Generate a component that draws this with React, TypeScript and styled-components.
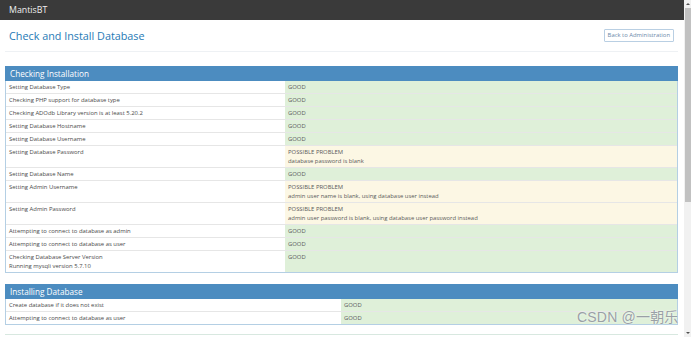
import React from "react";
import styled, { createGlobalStyle } from "styled-components";

const Global = createGlobalStyle`
  html, body { margin: 0; padding: 0; background: #fff; overflow: hidden; }
  body { font-family: "Open Sans", "Liberation Sans", sans-serif; color: #555; }
`;

const Shell = styled.div`
  display: flex;
  width: 691px;
  height: 337px;
  overflow: hidden;
`;

const Main = styled.div`
  flex: 1;
  min-width: 0;
  position: relative;
`;

const Scrollbar = styled.div`
  width: 7px;
  background: #f1f1f1;
  display: flex;
  flex-direction: column;
  align-items: stretch;
`;

const ScrollArrow = styled.div<{ $down?: boolean }>`
  height: 8px;
  display: flex;
  align-items: center;
  justify-content: center;
  &::after {
    content: "";
    border-left: 2px solid transparent;
    border-right: 2px solid transparent;
    ${(p) => (p.$down ? "border-top: 2px solid #505050;" : "border-bottom: 2px solid #505050;")}
  }
`;

const ScrollThumb = styled.div`
  height: 194px;
  margin: 0 0.5px;
  background: #c1c1c1;
`;

const ScrollTrack = styled.div`
  flex: 1;
`;

const Navbar = styled.div`
  height: 20px;
  background: #3a3a3a;
  display: flex;
  align-items: center;
  padding-left: 9px;
  color: #f0f0f0;
  font-size: 8.8px;
`;

const PageHeader = styled.div`
  margin: 0 6px 0 5px;
  height: 31px;
  border-bottom: 1px solid #eef1f4;
  display: flex;
  align-items: center;
  justify-content: space-between;
  padding: 0 4px;
`;

const Title = styled.h1`
  margin: 0;
  font-weight: 400;
  font-size: 10.8px;
  color: #2679b5;
`;

const BackButton = styled.button`
  font-family: inherit;
  font-size: 5.9px;
  color: #6a88a8;
  background: #fff;
  border: 1px solid #b9cfe3;
  border-radius: 1px;
  padding: 2px 3px;
  height: 13px;
  margin-right: 0;
  line-height: 1;
`;

const Panels = styled.div`
  display: flex;
  flex-direction: column;
  gap: 11px;
  margin: 14px 6px 0 5px;
`;

const Panel = styled.section`
  border: 1px solid #b4cfe4;
  border-top: none;
`;

const PanelHeader = styled.div`
  height: 15px;
  background: #4c8cc0;
  color: #fff;
  font-size: 8.2px;
  display: flex;
  align-items: center;
  padding-left: 5px;
  margin: 0 -1px;
`;

const Row = styled.div<{ $left: number }>`
  display: grid;
  grid-template-columns: ${(p) => p.$left}px 1fr;
  font-size: 5.9px;
  line-height: 9px;
  & + & > div { border-top: 1px solid #e6e6e6; }
`;

const LabelCell = styled.div`
  padding: 2px 3px 1px;
  color: #4a4a4a;
`;

const StatusCell = styled.div<{ $warn?: boolean }>`
  padding: 2px 3px 1px;
  background: ${(p) => (p.$warn ? "#fcf7e4" : "#dff0d9")};
  color: #5a5a5a;
  && { border-top-color: ${(p) => (p.$warn ? "#f1ead2" : "#d2e6cb")}; }
`;

const Line = styled.div``;

const NextPanelEdge = styled.div`
  margin: 9px 6px 0 5px;
  border-top: 1px solid #d8e8e0;
  height: 4px;
`;

const Watermark = styled.div`
  position: absolute;
  left: 577px;
  top: 306px;
  font-family: "Liberation Sans", "Noto Sans CJK SC", sans-serif;
  font-size: 14px;
  color: #9aa0a6;
  letter-spacing: 0.2px;
  text-shadow: 0 0 2px #fff;
  white-space: nowrap;
`;

type Item = { label: string[]; status: string[]; warn?: boolean };

const checking: Item[] = [
  { label: ["Setting Database Type"], status: ["GOOD"] },
  { label: ["Checking PHP support for database type"], status: ["GOOD"] },
  { label: ["Checking ADOdb Library version is at least 5.20.2"], status: ["GOOD"] },
  { label: ["Setting Database Hostname"], status: ["GOOD"] },
  { label: ["Setting Database Username"], status: ["GOOD"] },
  { label: ["Setting Database Password"], status: ["POSSIBLE PROBLEM", "database password is blank"], warn: true },
  { label: ["Setting Database Name"], status: ["GOOD"] },
  { label: ["Setting Admin Username"], status: ["POSSIBLE PROBLEM", "admin user name is blank, using database user instead"], warn: true },
  { label: ["Setting Admin Password"], status: ["POSSIBLE PROBLEM", "admin user password is blank, using database user password instead"], warn: true },
  { label: ["Attempting to connect to database as admin"], status: ["GOOD"] },
  { label: ["Attempting to connect to database as user"], status: ["GOOD"] },
  { label: ["Checking Database Server Version", "Running mysqli version 5.7.10"], status: ["GOOD"] },
];

const installing: Item[] = [
  { label: ["Create database if it does not exist"], status: ["GOOD"] },
  { label: ["Attempting to connect to database as user"], status: ["GOOD"] },
];

function Section({ title, items, left }: { title: string; items: Item[]; left: number }) {
  return (
    <Panel>
      <PanelHeader>{title}</PanelHeader>
      {items.map((it, i) => (
        <Row key={i} $left={left}>
          <LabelCell>
            {it.label.map((l, j) => (
              <Line key={j}>{l}</Line>
            ))}
          </LabelCell>
          <StatusCell $warn={it.warn}>
            {it.status.map((s, j) => (
              <Line key={j}>{s}</Line>
            ))}
          </StatusCell>
        </Row>
      ))}
    </Panel>
  );
}

export default function App() {
  return (
    <>
      <Global />
      <Shell>
        <Main>
          <Navbar>MantisBT</Navbar>
          <PageHeader>
            <Title>Check and Install Database</Title>
            <BackButton>Back to Administration</BackButton>
          </PageHeader>
          <Panels>
            <Section title="Checking Installation" items={checking} left={279} />
            <Section title="Installing Database" items={installing} left={335} />
          </Panels>
          <NextPanelEdge />
          <Watermark>CSDN @一朝乐</Watermark>
        </Main>
        <Scrollbar>
          <ScrollArrow />
          <ScrollThumb />
          <ScrollTrack />
          <ScrollArrow $down />
        </Scrollbar>
      </Shell>
    </>
  );
}
